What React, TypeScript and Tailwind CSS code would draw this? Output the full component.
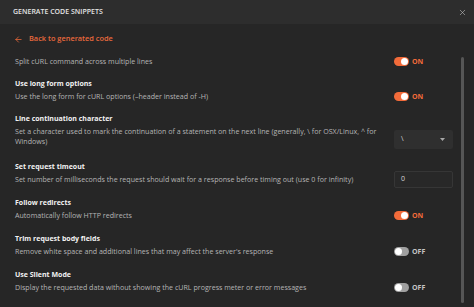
import { ArrowLeft, X } from 'lucide-react'

const font = { fontFamily: '"Open Sans", "Noto Sans", sans-serif' }

function Toggle({ on }: { on: boolean }) {
  return (
    <div className="flex items-center gap-[3px]">
      <div className={on
        ? 'w-[15px] h-[9px] rounded-full bg-[#f26b3a] flex items-center justify-end px-[1px]'
        : 'w-[15px] h-[9px] rounded-full bg-[#a0a0a0] flex items-center justify-start px-[1px]'}>
        <div className="w-[7px] h-[7px] rounded-full bg-white" />
      </div>
      <span className={on
        ? 'text-[7px] font-bold text-[#f26b3a] leading-none'
        : 'text-[7px] font-bold text-[#c4c4c4] leading-none'}>
        {on ? 'ON' : 'OFF'}
      </span>
    </div>
  )
}

function Row({ desc, control }: { desc: string; control: React.ReactNode }) {
  return (
    <div className="flex">
      <p className="flex-1 text-[7.1px] leading-[10px] text-[#b5b5b5] pr-[8px]">{desc}</p>
      <div className="w-[59px] shrink-0 flex items-center">
        <div className="h-[10px] w-full flex items-center">{control}</div>
      </div>
    </div>
  )
}

function Section({ title, desc, control, className }: { title: string; desc: string; control: React.ReactNode; className: string }) {
  return (
    <div className={className}>
      <h3 className="text-[7px] leading-[12px] font-bold text-[#f2f2f2] mb-[1px]">{title}</h3>
      <Row desc={desc} control={control} />
    </div>
  )
}

export default function App() {
  return (
    <div className="w-[474px] h-[307px] bg-[#262626] flex flex-col overflow-hidden" style={font}>
      <div className="h-[24px] shrink-0 bg-[#2d2d2d] flex items-center justify-between pl-[13px] pr-[7px]">
        <span className="text-[7px] font-semibold text-[#e4e4e4]">GENERATE CODE SNIPPETS</span>
        <X size={9} strokeWidth={1.6} className="text-[#bdbdbd]" />
      </div>

      <div className="flex-1 flex min-h-0">
        <div className="flex-1 pl-[15px]">
          <div className="h-[30px] flex items-center gap-[6px] -ml-[1px]">
            <ArrowLeft size={9} strokeWidth={2} className="text-[#f26b3a]" />
            <span className="text-[7.4px] font-semibold text-[#e9693d]">Back to generated code</span>
          </div>

          <div className="mt-[2px]">
            <Row desc="Split cURL command across multiple lines" control={<Toggle on />} />
          </div>

          <Section
            className="mt-[12px]"
            title="Use long form options"
            desc="Use the long form for cURL options (–header instead of -H)"
            control={<Toggle on />}
          />

          <div className="mt-[12px]">
            <h3 className="text-[7px] leading-[12px] font-bold text-[#f2f2f2] mb-[1px]">Line continuation character</h3>
            <div className="flex">
              <p className="flex-1 text-[7.1px] leading-[10px] text-[#b5b5b5] pr-[8px]">
                Set a character used to mark the continuation of a statement on the next line (generally, \ for OSX/Linux, ^ for Windows)
              </p>
              <div className="w-[59px] shrink-0 flex items-center pt-[4px]">
                <div className="w-full h-[19px] bg-[#2f2f2f] rounded-[2px] flex items-center justify-between pl-[7px] pr-[8px]">
                  <span className="text-[7px] text-[#d8d8d8]">\</span>
                  <svg width="5" height="3" viewBox="0 0 5 3"><path d="M0 0h5L2.5 3z" fill="#a8a8a8" /></svg>
                </div>
              </div>
            </div>
          </div>

          <Section
            className="mt-[12px]"
            title="Set request timeout"
            desc="Set number of milliseconds the request should wait for a response before timing out (use 0 for infinity)"
            control={
              <div className="w-full h-[17px] bg-[#282828] border border-[#363636] rounded-[2px] flex items-center pl-[6px]">
                <span className="text-[7px] text-[#d8d8d8]">0</span>
              </div>
            }
          />

          <Section
            className="mt-[13px]"
            title="Follow redirects"
            desc="Automatically follow HTTP redirects"
            control={<Toggle on />}
          />

          <Section
            className="mt-[13px]"
            title="Trim request body fields"
            desc="Remove white space and additional lines that may affect the server's response"
            control={<Toggle on={false} />}
          />

          <Section
            className="mt-[13px]"
            title="Use Silent Mode"
            desc="Display the requested data without showing the cURL progress meter or error messages"
            control={<Toggle on={false} />}
          />
        </div>

        <div className="w-[21px] shrink-0 flex justify-start pl-[8px] pt-[33px] pb-[4px]">
          <div className="w-[3px] h-full rounded-full bg-[#565656]" />
        </div>
      </div>
    </div>
  )
}
